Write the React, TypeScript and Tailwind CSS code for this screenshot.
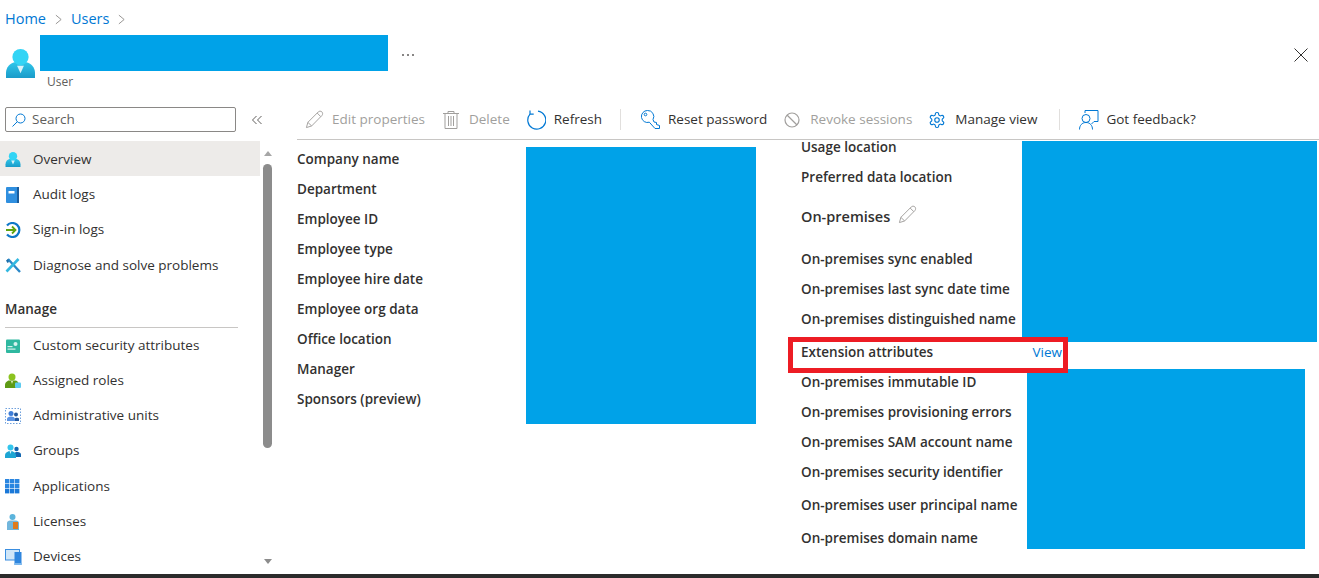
import { ReactNode } from "react";

const font = "font-['Open_Sans','Noto_Sans',sans-serif]";

const PersonIcon = ({ className }: { className?: string }) => (
  <svg viewBox="0 0 34 34" className={className}>
    <defs>
      <linearGradient id="pbody" x1="0" y1="0" x2="0" y2="1">
        <stop offset="0" stopColor="#2fc6ea" />
        <stop offset="1" stopColor="#1a9bc9" />
      </linearGradient>
    </defs>
    <path d="M0 34v-6c0-7 5-11 10-12.500h14c5 1.500 10 5.500 10 12.500v6z" fill="url(#pbody)" />
    <circle cx="17" cy="9.500" r="9.500" fill="#32d4f5" />
    <path d="M13 19.500h8l-4 9z" fill="#d9f3fa" />
  </svg>
);

const Pencil = ({ className }: { className?: string }) => (
  <svg viewBox="0 0 20 20" fill="none" stroke="currentColor" strokeWidth="1" className={className}>
    <path d="M1.500 18.500l1.500-5.500L14 2c1-1 2.800-1 3.800 0s1 2.800 0 3.800L7 16.800z" />
    <path d="M3 13l4 3.800M12.800 3.200L16.600 7" />
  </svg>
);

const ToolBtn = ({ icon, label, muted, className }: { icon: ReactNode; label: string; muted?: boolean; className?: string }) => (
  <div className={`flex items-center ${className ?? ""}`}>
    {icon}
    <span className={`whitespace-nowrap ${muted ? "text-[#a19f9d]" : "text-[#323130]"}`}>{label}</span>
  </div>
);

const navTop = [
  {
    name: "Overview",
    active: true,
    shift: "pt-[2px]",
    icon: <PersonIcon className="h-[15px] w-[16px]" />,
  },
  {
    name: "Audit logs",
    shift: "pt-[2px]",
    icon: (
      <svg viewBox="0 0 16 16" className="h-4 w-4">
        <rect x="1" y="0" width="13" height="16" rx="1" fill="#2f8fdf" />
        <rect x="12" y="0" width="2" height="16" fill="#1a5c9c" />
        <rect x="3.500" y="4" width="6" height="2.500" fill="#fff" />
      </svg>
    ),
  },
  {
    name: "Sign-in logs",
    shift: "pt-[2px]",
    icon: (
      <svg viewBox="0 0 16 16" fill="none" className="h-4 w-4">
        <path d="M2 3.500A7 7 0 1 1 2 12.500" stroke="#0f78c8" strokeWidth="2.200" />
        <path d="M1 8h9M7 4.500L10.500 8 7 11.500" stroke="#5ea30f" strokeWidth="1.800" />
      </svg>
    ),
  },
  {
    name: "Diagnose and solve problems",
    shift: "pt-[4px]",
    icon: (
      <svg viewBox="0 0 16 16" fill="none" className="h-4 w-4">
        <path d="M3 1l12 13" stroke="#2b88c8" strokeWidth="2.400" />
        <path d="M13.500 1L1.500 13.500" stroke="#33b8e0" strokeWidth="2.600" />
        <path d="M1 2.500L3 1l1 3-1.500 1z" fill="#1a6ca8" />
      </svg>
    ),
  },
];

const navManage = [
  {
    name: "Custom security attributes",
    icon: (
      <svg viewBox="0 0 16 16" className="h-4 w-4">
        <rect x="1" y="1.500" width="14" height="13.500" rx="1" fill="#2fb8a0" />
        <circle cx="10.500" cy="6" r="2" fill="#d5f3ee" />
        <rect x="2.500" y="8" width="5" height="1.200" fill="#d5f3ee" />
        <rect x="2.500" y="10.500" width="8" height="1.200" fill="#d5f3ee" />
      </svg>
    ),
  },
  {
    name: "Assigned roles",
    icon: (
      <svg viewBox="0 0 16 16" className="h-4 w-4">
        <circle cx="7" cy="4" r="3.500" fill="#8cc320" />
        <path d="M0 15v-3c0-3 3-4.500 4-4.500h6c2 0 4 2 4 4.500v3z" fill="#5e9a15" />
        <path d="M6 8h2l-1 3z" fill="#e6f3c8" />
        <rect x="10" y="9.500" width="6" height="5.500" rx="1" fill="#5ecbef" />
      </svg>
    ),
  },
  {
    name: "Administrative units",
    icon: (
      <svg viewBox="0 0 16 16" className="h-4 w-4">
        <rect x="0.500" y="0.500" width="15" height="15" fill="none" stroke="#6ea0dc" strokeDasharray="1.500 1.500" />
        <circle cx="6" cy="5.500" r="2.500" fill="#3f7ed8" />
        <circle cx="11" cy="6.500" r="2" fill="#24589c" />
        <path d="M2 13v-2c0-1.500 1.500-2.500 4-2.500s4 1 4 2.500v2z" fill="#5b93e3" />
        <path d="M10 13v-2.500c0-1 3.500-1 4 0V13z" fill="#24589c" />
      </svg>
    ),
  },
  {
    name: "Groups",
    icon: (
      <svg viewBox="0 0 16 16" className="h-4 w-4">
        <circle cx="5.500" cy="4.500" r="3" fill="#32c5ec" />
        <circle cx="11.500" cy="6" r="2.200" fill="#1366b0" />
        <path d="M9 14v-2.500C9 9.500 11 9 12 9s4 .5 4 2.500V14z" fill="#1366b0" />
        <path d="M0 15v-2.500C0 9.500 3 8 5.500 8S11 9.500 11 12.500V15z" fill="#1ea5d3" />
        <path d="M4.500 8h2L5.500 11z" fill="#d9f3fa" />
      </svg>
    ),
  },
  {
    name: "Applications",
    shift: "pt-[2px]",
    icon: (
      <svg viewBox="0 0 15 15" className="h-[15px] w-[15px]">
        {[0, 5, 10].map((y) =>
          [0, 5, 10].map((x) => <rect key={`${x}-${y}`} x={x} y={y} width="4.400" height="4.400" fill={y === 10 ? "#1a78d8" : "#2a86e0"} />)
        )}
      </svg>
    ),
  },
  {
    name: "Licenses",
    shift: "pt-[2px]",
    icon: (
      <svg viewBox="0 0 16 16" className="h-4 w-4">
        <circle cx="7.500" cy="3" r="3" fill="#5bb4dc" />
        <path d="M2 16V9c0-1.500 1.500-2.500 3-2.500h6c1.500 0 3 1 3 2.500v7z" fill="#72b6dc" />
        <rect x="8" y="8" width="5" height="7" fill="#e07b1c" />
      </svg>
    ),
  },
  {
    name: "Devices",
    shift: "pt-[2px]",
    icon: (
      <svg viewBox="0 0 17 16" className="h-4 w-[17px]">
        <rect x="0.500" y="0.500" width="14" height="10.500" fill="#cfe6f8" stroke="#3a8ee0" />
        <rect x="9.500" y="3" width="7" height="13" fill="#2f86de" />
        <rect x="9.500" y="14" width="7" height="2" fill="#7ab7ee" />
      </svg>
    ),
  },
];

const NavRow = ({ name, icon, active, shift }: { name: string; icon: ReactNode; active?: boolean; shift?: string }) => (
  <div className={`flex h-[35px] items-center pl-[5px] ${active ? "bg-[#edebe9]" : ""} ${shift ?? ""}`}>
    <span className="flex w-[28px] shrink-0">{icon}</span>
    <span className="whitespace-nowrap text-[#323130]">{name}</span>
  </div>
);

const leftLabels = [
  "Company name",
  "Department",
  "Employee ID",
  "Employee type",
  "Employee hire date",
  "Employee org data",
  "Office location",
  "Manager",
  "Sponsors (preview)",
];

const Label = ({ text, className }: { text: string; className: string }) => (
  <div className={`flex items-center whitespace-nowrap pb-[2px] font-[550] text-[#323130] ${className}`}>{text}</div>
);

export default function App() {
  return (
    <div className={`${font} relative flex h-[578px] w-[1319px] flex-col overflow-hidden bg-white text-[13.5px]`}>
      {/* breadcrumb */}
      <div className="flex h-[35px] items-center pl-[5px] pt-[3px] text-[14.5px] text-[#0078d4]">
        <span>Home</span>
        <svg viewBox="0 0 8 12" fill="none" stroke="#8a8886" className="mx-[9px] h-[11px] w-[7px]">
          <path d="M1 1l6 5-6 5" />
        </svg>
        <span>Users</span>
        <svg viewBox="0 0 8 12" fill="none" stroke="#8a8886" className="mx-[9px] h-[11px] w-[7px]">
          <path d="M1 1l6 5-6 5" />
        </svg>
      </div>

      {/* title */}
      <div className="flex h-[72px] shrink-0">
        <PersonIcon className="ml-[6px] mt-[13px] h-[31px] w-[29px] shrink-0" />
        <div className="ml-[5px] flex flex-col">
          <div className="h-[36px] w-[348px] bg-[#00a2e8]" />
          <div className="ml-[7px] mt-[2px] text-[12px] text-[#605e5c]">User</div>
        </div>
        <div className="ml-[14px] mt-[13px] flex h-[14px] items-center gap-[3px]">
          <span className="h-[2px] w-[2px] rounded-full bg-[#605e5c]" />
          <span className="h-[2px] w-[2px] rounded-full bg-[#605e5c]" />
          <span className="h-[2px] w-[2px] rounded-full bg-[#605e5c]" />
        </div>
        <svg viewBox="0 0 14 14" fill="none" stroke="#323130" className="ml-auto mr-[11px] mt-[13px] h-[14px] w-[14px]">
          <path d="M.5.500l13 13M13.500.500l-13 13" />
        </svg>
      </div>

      <div className="flex min-h-0 flex-1">
        {/* sidebar */}
        <div className="flex w-[275px] shrink-0">
          <div className="w-[260px] shrink-0">
            <div className="flex h-[25px] items-center">
              <div className="ml-[5px] flex h-[25px] w-[231px] shrink-0 items-center rounded-[2px] border border-[#8a8886] pl-[6px] text-[#605e5c]">
                <svg viewBox="0 0 14 14" fill="none" stroke="#0078d4" className="mr-[6px] h-[14px] w-[14px]">
                  <circle cx="8.500" cy="5.500" r="4.500" />
                  <path d="M5.300 8.700L.5 13.500" />
                </svg>
                Search
              </div>
              <svg viewBox="0 0 10 10" fill="none" stroke="#605e5c" className="ml-[16px] h-[10px] w-[10px] shrink-0">
                <path d="M4.500 1L.5 5l4 4M9.500 1l-4 4 4 4" />
              </svg>
            </div>
            <div className="mt-[9px]">
              {navTop.map((n) => (
                <NavRow key={n.name} {...n} />
              ))}
            </div>
            <div className="ml-[5px] mt-[10px] flex h-[37px] w-[233px] items-center border-b border-[#c8c6c4] font-semibold text-[#323130]">
              Manage
            </div>
            <div>
              {navManage.map((n) => (
                <NavRow key={n.name} {...n} />
              ))}
            </div>
          </div>
          <div className="ml-[3px] flex w-[9px] flex-col items-center pb-[10px] pt-[44px]">
            <div className="h-0 w-0 border-x-[4.500px] border-b-[5px] border-x-transparent border-b-[#a6a6a6]" />
            <div className="mt-[8px] h-[284px] w-[9px] shrink-0 rounded-[5px] bg-[#8c8c8c]" />
            <div className="mt-auto h-0 w-0 border-x-[4.500px] border-t-[5px] border-x-transparent border-t-[#8c8c8c]" />
          </div>
        </div>

        {/* main */}
        <div className="ml-[22px] min-w-0 flex-1">
          <div className="flex h-[33px] items-center border-b border-[#c8c6c4] pb-[7px]">
            <ToolBtn
              muted
              label="Edit properties"
              className="ml-[8px]"
              icon={<Pencil className="mr-[8px] h-[19px] w-[19px] text-[#a19f9d]" />}
            />
            <ToolBtn
              muted
              label="Delete"
              className="ml-[18px]"
              icon={
                <svg viewBox="0 0 16 18" fill="none" stroke="#a19f9d" className="mr-[10px] h-[18px] w-[16px]">
                  <path d="M0 2.500h16M5 2.500V.5h6v2M2 2.500v15h12v-15M5.500 5v10M8 5v10M10.500 5v10" />
                </svg>
              }
            />
            <ToolBtn
              label="Refresh"
              className="ml-[16px]"
              icon={
                <svg viewBox="0 0 20 20" fill="none" stroke="#0078d4" strokeWidth="1.200" className="mr-[8px] h-[20px] w-[20px]">
                  <path d="M4 4.200A9 9 0 1 0 12 1.200" />
                  <path d="M4 .5v3.700h3.700" />
                </svg>
              }
            />
            <div className="ml-[18px] h-[21px] w-px bg-[#e1dfdd]" />
            <ToolBtn
              label="Reset password"
              className="ml-[20px]"
              icon={
                <svg viewBox="0 0 19 19" fill="none" stroke="#0078d4" className="mr-[8px] h-[19px] w-[19px]">
                  <path d="M6.500.5a6 6 0 1 0 1.800 11.700L14 18.500h4.500v-3l-3-1v-2l-2.500-.5-1-2.500a6 6 0 0 0-5.500-9z" />
                  <circle cx="4.500" cy="4.500" r="1.300" />
                </svg>
              }
            />
            <ToolBtn
              muted
              label="Revoke sessions"
              className="ml-[17px]"
              icon={
                <svg viewBox="0 0 16 16" fill="none" stroke="#a19f9d" strokeWidth="1.200" className="mr-[10px] h-[16px] w-[16px]">
                  <circle cx="8" cy="8" r="7" />
                  <path d="M3 3l10 10" />
                </svg>
              }
            />
            <ToolBtn
              label="Manage view"
              className="ml-[16px]"
              icon={
                <svg viewBox="0 0 24 24" fill="none" stroke="#0078d4" strokeWidth="1.500" className="mr-[9px] h-[18px] w-[18px]">
                  <path d="M12.220 2h-.44a2 2 0 0 0-2 2v.18a2 2 0 0 1-1 1.730l-.43.25a2 2 0 0 1-2 0l-.15-.08a2 2 0 0 0-2.730.73l-.22.380a2 2 0 0 0 .73 2.730l.15.100a2 2 0 0 1 1 1.720v.510a2 2 0 0 1-1 1.740l-.15.090a2 2 0 0 0-.73 2.730l.22.380a2 2 0 0 0 2.730.730l.15-.08a2 2 0 0 1 2 0l.43.250a2 2 0 0 1 1 1.730V20a2 2 0 0 0 2 2h.44a2 2 0 0 0 2-2v-.18a2 2 0 0 1 1-1.730l.43-.25a2 2 0 0 1 2 0l.15.080a2 2 0 0 0 2.730-.730l.22-.390a2 2 0 0 0-.73-2.730l-.15-.080a2 2 0 0 1-1-1.740v-.500a2 2 0 0 1 1-1.740l.15-.090a2 2 0 0 0 .73-2.730l-.22-.380a2 2 0 0 0-2.730-.730l-.15.080a2 2 0 0 1-2 0l-.43-.250a2 2 0 0 1-1-1.730V4a2 2 0 0 0-2-2z" />
                  <circle cx="12" cy="12" r="3" />
                </svg>
              }
            />
            <div className="ml-[22px] h-[21px] w-px bg-[#e1dfdd]" />
            <ToolBtn
              label="Got feedback?"
              className="ml-[19px]"
              icon={
                <svg viewBox="0 0 20 20" fill="none" stroke="#0078d4" className="mr-[7px] h-[20px] w-[20px]">
                  <path d="M6 3V.5h13v11h-4l-2.500 2.500" />
                  <circle cx="7" cy="8.500" r="4" />
                  <path d="M.5 19.500c0-4 2.500-7 6.500-7s6.500 3 6.500 7" />
                </svg>
              }
            />
          </div>

          <div className="flex">
            {/* left properties */}
            <div className="flex w-[504px] shrink-0 pt-[5px]">
              <div className="w-[229px] shrink-0">
                {leftLabels.map((t) => (
                  <Label key={t} text={t} className="h-[30px]" />
                ))}
              </div>
              <div className="mt-[2px] h-[277px] w-[230px] bg-[#00a2e8]" />
            </div>

            {/* right properties */}
            <div className="relative flex-1">
              <div className="flex">
                <div className="w-[221px] shrink-0">
                  <Label text="Usage location" className="h-[16px]" />
                  <Label text="Preferred data location" className="mt-[14px] h-[16px]" />
                  <div className="mt-[14px] flex h-[38px] items-center pb-[4px] text-[14.5px] font-[550] text-[#323130]">
                    On-premises
                    <Pencil className="mb-[5px] ml-[8px] h-[19px] w-[19px] text-[#a19f9d]" />
                  </div>
                  <Label text="On-premises sync enabled" className="mt-[14px] h-[16px]" />
                  <Label text="On-premises last sync date time" className="mt-[14px] h-[16px]" />
                  <Label text="On-premises distinguished name" className="mt-[14px] h-[16px]" />
                </div>
                <div className="mt-[1px] h-[201px] w-[295px] bg-[#00a2e8]" />
              </div>
              <div className="mt-[3px] flex h-[16px] w-[261px] items-center justify-between pb-[2px]">
                <span className="font-[550] text-[#323130]">Extension attributes</span>
                <span className="text-[#0078d4]">View</span>
              </div>
              <div className="flex">
                <div className="w-[226px] shrink-0">
                  <Label text="On-premises immutable ID" className="mt-[14px] h-[16px]" />
                  <Label text="On-premises provisioning errors" className="mt-[14px] h-[16px]" />
                  <Label text="On-premises SAM account name" className="mt-[14px] h-[16px]" />
                  <Label text="On-premises security identifier" className="mt-[14px] h-[16px]" />
                  <Label text="On-premises user principal name" className="mt-[17px] h-[16px]" />
                  <Label text="On-premises domain name" className="mt-[17px] h-[16px]" />
                </div>
                <div className="mt-[8px] h-[180px] w-[278px] bg-[#00a2e8]" />
              </div>
              {/* red annotation box */}
              <div className="absolute left-[-13px] top-[197px] h-[36px] w-[280px] border-[5px] border-[#ed1c24]" />
            </div>
          </div>
        </div>
      </div>

      <div className="h-[4px] shrink-0 bg-[#2b2b2b]" />
    </div>
  );
}
